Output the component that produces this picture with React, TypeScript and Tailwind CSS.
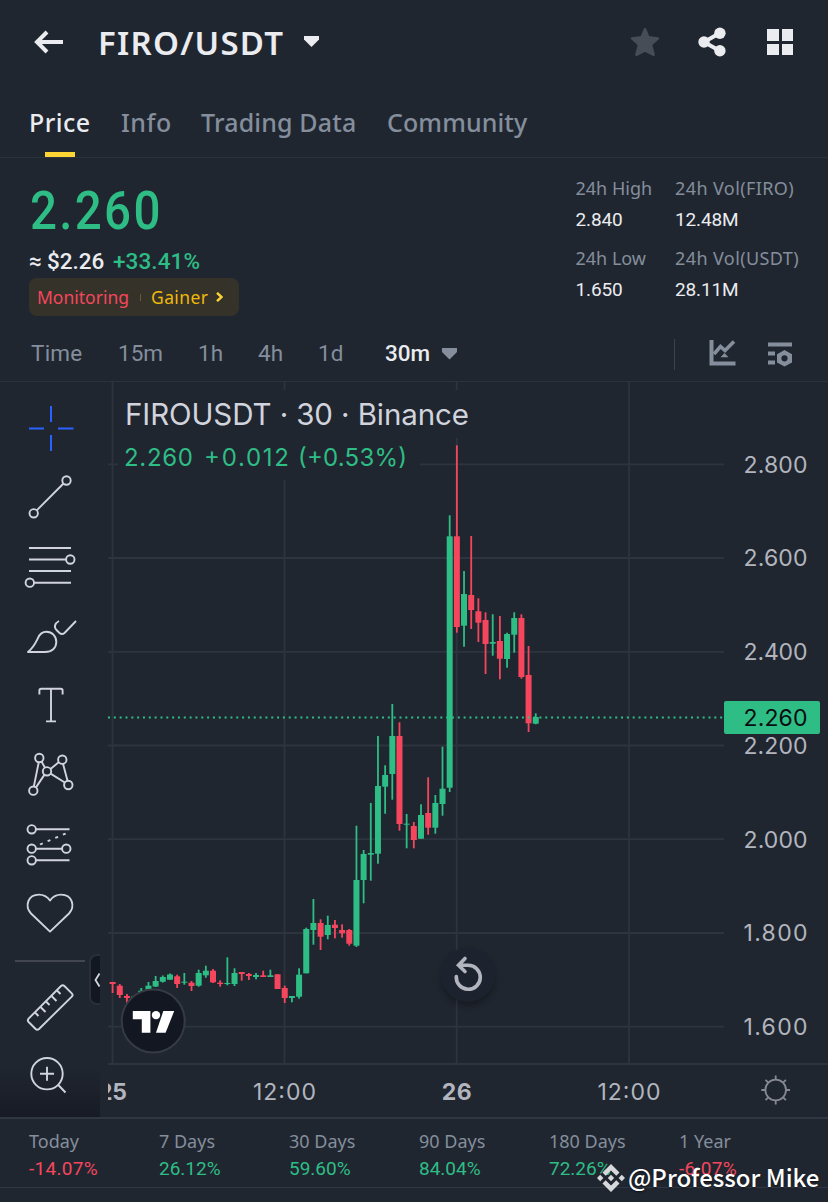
import React from 'react';

// y positions on the chart canvas: body top, body bottom, wick top, wick bottom, direction
const candles: [number, number, number, number, 'u' | 'd'][] = [
  [982, 984, 982, 993, 'd'],
  [985.7, 995, 984, 998, 'd'],
  [996, 998, 994, 1002.7, 'd'],
  [996.5, 998, 996.5, 999, 'u'],
  [990.7, 997, 988, 998, 'u'],
  [985.7, 991, 982, 992, 'u'],
  [981, 986.5, 976, 987, 'u'],
  [977, 981.7, 975.5, 982.5, 'u'],
  [974.5, 979.7, 973.5, 979.7, 'u'],
  [976.3, 984, 974.7, 988, 'd'],
  [981.7, 982.7, 973, 984.7, 'u'],
  [982.7, 986, 981, 991, 'd'],
  [973, 985.7, 969.7, 986.7, 'u'],
  [970.7, 975.3, 965.7, 977.7, 'u'],
  [970.7, 982.3, 969, 983, 'd'],
  [982.7, 984, 980.3, 986.7, 'd'],
  [983, 984, 957.3, 985.3, 'u'],
  [973, 984, 968.3, 986, 'u'],
  [972, 974, 972, 980.7, 'd'],
  [974, 976, 973, 980, 'd'],
  [975, 977, 973, 979.3, 'u'],
  [975.3, 977, 970.7, 977, 'd'],
  [975.3, 977, 969.7, 977, 'u'],
  [974.3, 989, 974.3, 989, 'd'],
  [988, 998, 985.7, 1003, 'd'],
  [996, 998, 996, 1002.3, 'u'],
  [974.7, 996.7, 968.3, 998.7, 'u'],
  [929, 973.3, 927.7, 973.3, 'u'],
  [923, 930, 899, 944.7, 'u'],
  [923, 936.7, 919.3, 950, 'd'],
  [925, 935, 915.7, 939.3, 'u'],
  [924.7, 928, 920, 938.3, 'd'],
  [930, 933.3, 924.3, 937.7, 'd'],
  [930, 943.7, 929, 945.7, 'd'],
  [880, 945.7, 825.7, 947, 'u'],
  [854, 880, 850, 903.3, 'u'],
  [853, 854.7, 803, 880.7, 'u'],
  [786, 853.7, 736, 863.7, 'u'],
  [775, 786.7, 765.3, 813.7, 'u'],
  [736, 774, 704, 799.7, 'u'],
  [736, 824, 722.3, 830.7, 'd'],
  [823.7, 824.7, 814, 848.3, 'u'],
  [826, 840, 822, 848.3, 'd'],
  [815, 838.7, 804.3, 838.7, 'u'],
  [813, 827.7, 777.3, 834.7, 'd'],
  [803, 827.7, 795, 833.7, 'u'],
  [788.7, 804, 746.7, 815.7, 'u'],
  [536.3, 787.7, 515.3, 792, 'u'],
  [536.3, 627, 445.3, 632.7, 'd'],
  [594, 625.7, 571, 646.7, 'u'],
  [595, 610, 536, 629, 'd'],
  [611.3, 622.7, 598.3, 642, 'd'],
  [620, 644, 612.3, 674, 'd'],
  [642, 643.7, 614.3, 655.7, 'u'],
  [641, 658.7, 616, 679.3, 'd'],
  [634, 659, 632.7, 667.7, 'u'],
  [618, 634.7, 612.3, 652.7, 'u'],
  [618, 677, 614.3, 678.7, 'd'],
  [675, 723.3, 646, 732, 'd'],
  [717, 723.7, 713.3, 724.3, 'u'],
];

const priceTicks = [
  { label: '2.800', y: 464.3 },
  { label: '2.600', y: 558 },
  { label: '2.400', y: 651.8 },
  { label: '2.200', y: 745.5 },
  { label: '2.000', y: 839.2 },
  { label: '1.800', y: 933 },
  { label: '1.600', y: 1026.7 },
];

const timeTicks = [
  { label: '25', x: 112.5, w: 29, bold: true },
  { label: '12:00', x: 284.5, w: 63, bold: false },
  { label: '26', x: 456.7, w: 30, bold: true },
  { label: '12:00', x: 629, w: 63, bold: false },
];

const periods = [
  { label: 'Today', value: '-14.07%' },
  { label: '7 Days', value: '26.12%' },
  { label: '30 Days', value: '59.60%' },
  { label: '90 Days', value: '84.04%' },
  { label: '180 Days', value: '72.26%' },
  { label: '1 Year', value: '-6.07%' },
];

const Header = () => (
  <header className="flex h-[86px] items-center pb-[2px] pl-[34px] pr-[35px] text-[#eaecef]">
    <svg className="h-6 w-[29px]" viewBox="0 0 29 24" fill="none" stroke="currentColor" strokeWidth="4">
      <path d="M29 12H3M13 2L3 12L13 22" />
    </svg>
    <h1 className="ml-[35px] w-[206px] whitespace-nowrap text-[33px] font-semibold leading-none tracking-[1.25px]">FIRO/USDT</h1>
    <svg className="-mt-px h-[11px] w-[15px]" viewBox="0 0 15 11" fill="currentColor">
      <path d="M0 0H15V3.5L7.5 11L0 3.5Z" />
    </svg>
    <div className="ml-auto flex items-center">
      <svg className="h-[30px] w-[30px] text-[#474d57]" viewBox="0 0 30 30" fill="currentColor" stroke="currentColor" strokeWidth="2.5" strokeLinejoin="round">
        <path d="M15 2.2L18.4 10.2L28 11.4L21 17.6L23.6 27.8L15 23.4L6.4 27.8L9 17.6L2 11.4L11.6 10.2Z" />
      </svg>
      <svg className="ml-[37px] h-[30px] w-[30px]" viewBox="0 0 30 30" fill="currentColor">
        <path d="M7 15L23 6M7 15L23 24" stroke="currentColor" strokeWidth="4" />
        <circle cx="7" cy="15" r="5.7" />
        <circle cx="22.9" cy="6.2" r="5.7" />
        <circle cx="22.9" cy="23.8" r="5.7" />
      </svg>
      <div className="ml-[40px] grid grid-cols-2 gap-[3px]">
        <i className="size-[11.5px] bg-current" />
        <i className="size-[11.5px] bg-current" />
        <i className="size-[11.5px] bg-current" />
        <i className="size-[11.5px] bg-current" />
      </div>
    </div>
  </header>
);

const Tabs = () => (
  <nav className="flex h-[72px] items-stretch border-b border-[#2b323d] pl-[29px] text-[25px] font-medium text-[#848e9c]">
    <button className="relative mr-[30px] w-[62px] whitespace-nowrap pt-[2px] text-left tracking-[0.5px] text-[#eaecef]">
      Price
      <span className="absolute bottom-0 left-4 h-[5px] w-[30px] bg-[#fcd535]" />
    </button>
    <button className="mr-[29px] w-[51px] whitespace-nowrap pt-[2px] text-left tracking-[0.5px]">Info</button>
    <button className="mr-[30px] w-[156px] whitespace-nowrap pt-[2px] text-left tracking-[0.15px]">Trading Data</button>
    <button className="whitespace-nowrap pt-[2px] tracking-[0.1px]">Community</button>
  </nav>
);

const Stat = ({ label, value }: { label: string; value: string }) => (
  <div className="h-[69.5px] whitespace-nowrap">
    <div className={`text-[18px] leading-[30px] text-[#848e9c] ${label.includes('Vol') ? 'tracking-[0.4px]' : ''}`}>{label}</div>
    <div className="pt-px font-[Roboto] text-[19px] leading-8 tracking-[-0.15px] text-[#eaecef]">{value}</div>
  </div>
);

const Summary = () => (
  <section className="flex h-[169px] justify-between pl-[29px]">
    <div className="pt-[23px]">
      <div className="ml-px w-[145px] origin-left scale-x-[0.88] font-[Roboto] text-[54px] font-medium leading-[60px] tracking-[2.6px] text-[#2ebd85]">2.260</div>
      <div className="mt-[4px] flex h-[33px] items-center whitespace-nowrap pt-px font-[Roboto] text-[22.5px] font-medium text-[#eaecef]">
        <span className="w-[18px]">≈</span>
        <span className="w-[66px]">$2.26</span>
        <span className="tracking-[0.1px] text-[#2ebd85]">+33.41%</span>
      </div>
      <div className="flex h-[38px] w-[210px] items-center whitespace-nowrap rounded-lg bg-[#353229] pl-2 text-[17.5px]">
        <span className="w-[103px] text-[#f6465d]">Monitoring</span>
        <span className="mr-[10px] h-[7px] w-px bg-[#6b5a35]" />
        <span className="w-[65px] tracking-[0.4px] text-[#f0b90b]">Gainer</span>
        <svg className="-mt-px h-[10px] w-[7px]" viewBox="0 0 7 10" fill="none" stroke="#fcd535" strokeWidth="2.4">
          <path d="M1 0.8L5.4 5L1 9.2" />
        </svg>
      </div>
    </div>
    <div className="grid w-[252.5px] grid-cols-[99.5px_1fr] content-start pt-[15px]">
      <Stat label="24h High" value="2.840" />
      <Stat label="24h Vol(FIRO)" value="12.48M" />
      <Stat label="24h Low" value="1.650" />
      <Stat label="24h Vol(USDT)" value="28.11M" />
    </div>
  </section>
);

const Intervals = () => (
  <div className="flex h-[55px] items-center whitespace-nowrap border-b border-[#2b323d] pl-[31px] pr-[35px] font-[Roboto] text-[22.5px] text-[#848e9c]">
    <button className="w-[87px] text-left tracking-[0.2px]">Time</button>
    <button className="w-[80px] text-left">15m</button>
    <button className="w-[60px] text-left">1h</button>
    <button className="w-[60px] text-left">4h</button>
    <button className="w-[67px] text-left">1d</button>
    <button className="w-[57px] text-left font-medium text-[#eaecef]">30m</button>
    <svg className="-mt-px h-[12px] w-[15px]" viewBox="0 0 15 12" fill="currentColor">
      <path d="M0 0H15V4L7.5 11.5L0 4Z" />
    </svg>
    <span className="ml-auto mr-[34px] h-[31px] w-px bg-[#3a424e]" />
    <svg className="-mt-[2px] h-[26px] w-[27px]" viewBox="0 0 27 26" fill="none" stroke="currentColor" strokeWidth="4">
      <path d="M2.5 0V23.5H26.5" />
      <path d="M5 14L11.5 6.5L16 10.5L25 1.5" strokeWidth="3.6" />
      <path d="M11.5 17.3L15.5 13L19.5 17.3Z" fill="currentColor" stroke="none" />
    </svg>
    <svg className="-mt-px ml-[31px] h-[26px] w-[26px]" viewBox="0 0 26 26" fill="currentColor">
      <path d="M1 1.5H25V5.5H1ZM1 10.5H8V14.5H1ZM1 19.5H8V23.5H1Z" />
      <path fillRule="evenodd" d="M17.5 9L25 13.2V21.4L17.5 25.6L10 21.4V13.2ZM17.5 14.2A3.1 3.1 0 1 0 17.5 20.4A3.1 3.1 0 1 0 17.5 14.2Z" />
    </svg>
  </div>
);

const Tool = ({ children, className = '' }: { children: React.ReactNode; className?: string }) => (
  <svg className={`block h-[69px] w-[100px] shrink-0 ${className}`} viewBox="0 0 100 69" fill="none" stroke="#d1d4dc" strokeWidth="1.9">
    {children}
  </svg>
);

const Toolbar = () => (
  <aside className="relative flex h-full w-[100px] flex-col bg-gradient-to-b from-[#202630] from-93% to-[#171b26] pt-[12px]">
    <Tool>
      <path d="M29 34.5H44M58 34.5H73.5M51 12V28M51 41V57" stroke="#2962ff" strokeWidth="2" />
    </Tool>
    <Tool>
      <circle cx="66.5" cy="17.5" r="4.2" />
      <circle cx="33.7" cy="50.3" r="4.2" />
      <path d="M63.5 20.5L36.7 47.3" />
    </Tool>
    <Tool>
      <path d="M29 16H71M29 27.5H66M29 39H71M34 50.7H71" />
      <circle cx="70.3" cy="27.5" r="4.2" />
      <circle cx="29.8" cy="50.7" r="4.2" />
    </Tool>
    <Tool>
      <path d="M28 51C34 46 36 41 38 37C40 32 43 30.7 46.5 30.7C52 30.7 56.3 35 56.3 41C56.3 47 52 51 45 51Z" strokeLinejoin="round" />
      <path d="M59 20C54.5 22.5 53.5 26.5 57 29.5L59.5 32C61 33.3 63 33.3 64.5 32L76 20" />
    </Tool>
    <Tool>
      <path d="M39.4 24.5V20.5Q39.4 18.7 41.2 18.7H60.8Q62.6 18.7 62.6 20.5V24.5M51 18.7V51.4M46 51.4H56" />
    </Tool>
    <Tool>
      <path d="M38.8 23L33.8 47.6M41.5 22.5L45 28.7M44.5 35.6L36 48.4M50.5 30L59 23M63 24.8L67.6 41.9M50.6 34.6L64.8 43.5" />
      <circle cx="39.3" cy="19" r="4.2" />
      <circle cx="62.3" cy="20.7" r="4.2" />
      <circle cx="47" cy="32.3" r="4.2" />
      <circle cx="33.3" cy="51.7" r="4.2" />
      <circle cx="68.3" cy="46" r="4.2" />
    </Tool>
    <Tool>
      <circle cx="31.7" cy="21.3" r="4.2" />
      <circle cx="31.7" cy="40.7" r="4.2" />
      <circle cx="66.3" cy="40.7" r="4.2" />
      <circle cx="31.7" cy="52.3" r="4.2" />
      <path d="M36 21.3H69.5M36 40.7H62M36 52.3H69.5" />
      <path d="M40 36.5L67 25" strokeDasharray="3 5.3" />
    </Tool>
    <Tool>
      <path d="M50 54.6L31 36.5C24.6 29.5 27.5 17.6 39 17.6C44 17.6 47.5 20 50 23.5C52.5 20 56 17.6 61 17.6C72.5 17.6 75.4 29.5 69 36.5Z" strokeLinejoin="round" />
    </Tool>
    <div className="ml-[15px] mt-[14px] h-[2px] w-[70px] shrink-0 bg-[#434651]" />
    <Tool className="mt-[11px]">
      <path d="M61 13Q62.7 11.4 64.4 13L71.8 20.4Q73.4 22 71.8 23.6L39 56Q37.3 57.6 35.6 56L28.6 49Q27 47.3 28.6 45.6Z" />
      <path d="M57 17.5L60.5 21M51.5 23L56.5 28M46 28.5L49.5 32M40.5 34L45.5 39M35 39.5L38.5 43" />
    </Tool>
    <Tool>
      <circle cx="47" cy="31.7" r="15.7" />
      <path d="M40 31.7H54M47 24.7V38.7M58.3 43L65.5 50.5" />
    </Tool>
    <button className="absolute right-0 top-[572px] flex h-[51px] w-[11px] items-center justify-end rounded-l-lg border-2 border-r-0 border-[#2a2e39] bg-[#131722]">
      <svg className="h-[14px] w-[6px]" viewBox="0 0 6 14" fill="none" stroke="#d1d4dc" strokeWidth="1.8">
        <path d="M5.5 0.5L1.5 7L5.5 13.5" />
      </svg>
    </button>
  </aside>
);

const Chart = () => (
  <svg className="block h-[735px] w-[728px]" viewBox="100 382 728 735" fontFamily="Inter, sans-serif" fontSize="23">
    <defs>
      <clipPath id="plot">
        <rect x="108" y="382" width="720" height="735" />
      </clipPath>
      <filter id="shadow" x="-50%" y="-50%" width="200%" height="200%">
        <feDropShadow dx="0" dy="4" stdDeviation="4" floodColor="#000" floodOpacity="0.35" />
      </filter>
    </defs>
    <g clipPath="url(#plot)">
      <g stroke="#2e343f" strokeWidth="1.8">
        {priceTicks.map(t => <line key={t.label} x1="108" x2="724" y1={t.y} y2={t.y} />)}
        {timeTicks.map(t => <line key={t.x} x1={t.x} x2={t.x} y1="382" y2="1064" />)}
        <line x1="108" x2="828" y1="1064" y2="1064" />
      </g>
      <rect x="118" y="390" width="358" height="48" fill="#202630" />
      <rect x="118" y="438" width="302" height="42" fill="#202630" />
      {candles.map(([top, bottom, high, low, dir], i) => {
        const x = 112.6 + i * 7.172;
        const color = dir === 'u' ? '#2ebd85' : '#f6465d';
        return (
          <g key={i} fill={color}>
            <rect x={x - 0.9} y={high} width="1.8" height={low - high} />
            <rect x={x - 3} y={top} width="6" height={bottom - top} />
          </g>
        );
      })}
      <line x1="108" x2="724" y1="717.5" y2="717.5" stroke="#2ebd85" strokeWidth="2" strokeDasharray="2 3.83" />
      {timeTicks.map(t => (
        <text key={t.x} x={t.x} y="1100" textAnchor="middle" textLength={t.w} fontWeight={t.bold ? 700 : 400} fill="#b2b5be">{t.label}</text>
      ))}
    </g>
    <text x="125" y="425" fontSize="29.5" textLength="344" fill="#d1d4dc">FIROUSDT · 30 · Binance</text>
    <g fill="#2ebd85" fontSize="24">
      <text x="124" y="466" textLength="69">2.260</text>
      <text x="204" y="466" textLength="85">+0.012</text>
      <text x="298" y="466" textLength="109">(+0.53%)</text>
    </g>
    {priceTicks.map(t => (
      <text key={t.label} x="743.5" y={t.y + 8.3} textLength="64" fill="#b2b5be">{t.label}</text>
    ))}
    <rect x="724" y="701" width="96" height="33" rx="2" fill="#2ebd85" />
    <text x="743.5" y="725.8" textLength="64" fill="#0b0e11">2.260</text>

    <circle cx="153.2" cy="1021" r="31.5" fill="#131722" stroke="#363a45" strokeWidth="2" />
    <g fill="#fff">
      <path d="M132.8 1011H150.4V1032.8H141.8V1019.3H132.8Z" />
      <circle cx="156" cy="1015.1" r="4.2" />
      <path d="M163.3 1011H174.2L165.6 1032.8H156Z" />
    </g>

    <circle cx="468" cy="974.5" r="27" fill="#1f222d" filter="url(#shadow)" />
    <path d="M456.3 976.5A12 12 0 1 0 468.3 965.3H460.5M465 958.5L458.5 965.3L465 971.5" fill="none" stroke="#b2b5be" strokeWidth="3.6" strokeLinecap="round" />

    <g fill="none" stroke="#868993" strokeWidth="1.8">
      <circle cx="775.7" cy="1090" r="10.3" />
      <path d="M775.7 1075.5V1080M775.7 1100V1104.5M761.3 1090H765.6M785.8 1090H790M765.5 1079.8L768.6 1082.9M782.8 1097.1L785.9 1100.2M765.5 1100.2L768.6 1097.1M782.8 1082.9L785.9 1079.8" />
    </g>
  </svg>
);

const Performance = () => (
  <footer className="grid h-[71px] grid-cols-[repeat(6,130px)] content-start whitespace-nowrap border-b border-t-2 border-[#303742] pl-[29px] pt-[8px]">
    {periods.map(p => (
      <div key={p.label}>
        <div className="text-[18px] leading-[28px] text-[#848e9c]">{p.label}</div>
        <div className={`pt-px font-[Roboto] text-[19px] leading-[26px] ${p.value.startsWith('-') ? 'tracking-[0.3px] text-[#f6465d]' : 'text-[#2ebd85]'}`}>
          {p.value}
        </div>
      </div>
    ))}
  </footer>
);

const Watermark = () => (
  <div className="absolute bottom-[7px] left-[597px] flex h-9 items-center whitespace-nowrap font-['Noto_Sans_CJK_SC',sans-serif] text-[24px] font-medium text-white [text-shadow:0_1px_2px_rgba(0,0,0,0.6)]">
    <svg className="mr-[3px] mt-[2px] h-7 w-7" viewBox="0 0 28 28" fill="#d6d8da">
      <path d="M14 0L22.5 8.5L19.3 11.7L14 6.4L8.7 11.7L5.5 8.5ZM14 28L22.5 19.5L19.3 16.3L14 21.6L8.7 16.3L5.5 19.5Z" />
      <path d="M3.2 10.8L6.4 14L3.2 17.2L0 14ZM24.8 10.8L28 14L24.8 17.2L21.6 14ZM14 10.8L17.2 14L14 17.2L10.8 14Z" />
    </svg>
    <span>@Professor Mike</span>
  </div>
);

export default function App() {
  return (
    <div className="relative h-[1202px] w-[828px] overflow-hidden bg-[#202630] font-['Noto_Sans',sans-serif]">
      <Header />
      <Tabs />
      <Summary />
      <Intervals />
      <main className="flex h-[735px]">
        <Toolbar />
        <Chart />
      </main>
      <Performance />
      <Watermark />
    </div>
  );
}
